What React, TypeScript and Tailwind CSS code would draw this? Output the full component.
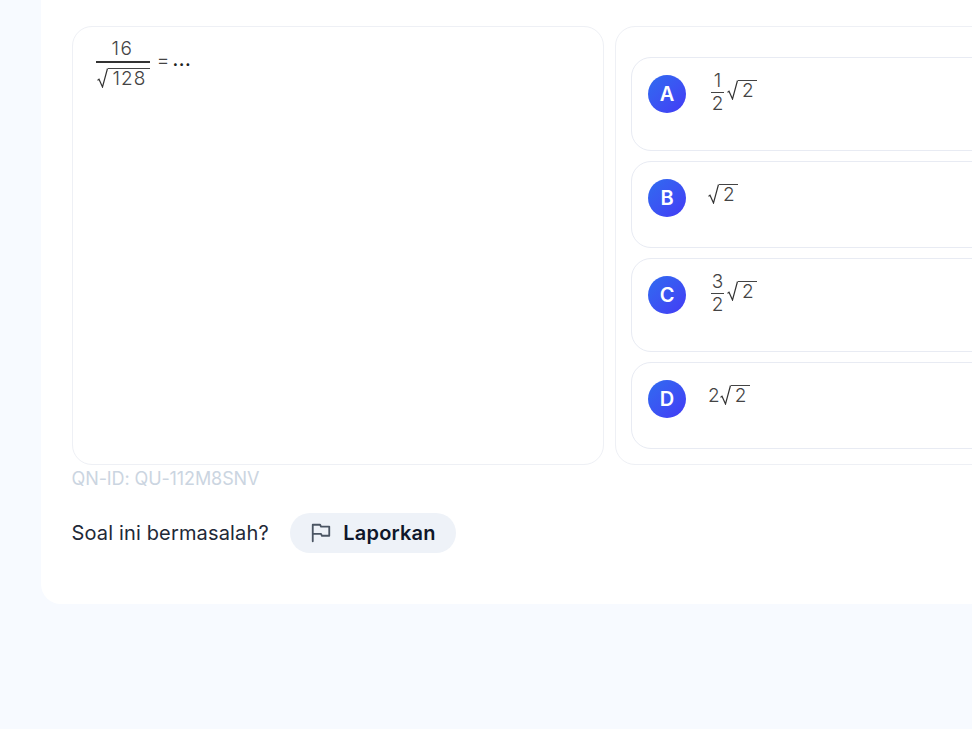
const mathFont = "font-['Inter',sans-serif] font-light text-[#444444]";

function Radical({ w, h }: { w: number; h: number }) {
  return (
    <svg width={w} height={h} viewBox={`0 0 ${w} ${h}`} fill="none" className="shrink-0 block">
      <path d={`M0.5 ${h * 0.62} L2 ${h * 0.56} L${w * 0.5} ${h - 1} L${w - 0.5} 0.5`} stroke="#333333" strokeWidth="1.2" />
    </svg>
  );
}

function Sqrt({ children }: { children: string }) {
  return (
    <span className="flex items-start">
      <Radical w={11} h={20} />
      <span className="border-t border-[#444444] w-[19px] h-[20px] pl-[4px] text-[19px] leading-[19px]">{children}</span>
    </span>
  );
}

function Frac({ n, d }: { n: string; d: string }) {
  return (
    <span className="flex flex-col items-center w-[13px] mr-[3px] text-[19px] leading-[20px]">
      <span className="h-[21px]">{n}</span>
      <span className="w-full border-t border-[#444444] h-[1px]"></span>
      <span className="h-[22px] pt-[1px]">{d}</span>
    </span>
  );
}

function Option({
  letter,
  height,
  children,
}: {
  letter: string;
  height: string;
  children: React.ReactNode;
}) {
  return (
    <div className={`flex items-start border border-[#e8ebf3] rounded-[20px] bg-white pl-[16px] pt-[17px] ${height}`}>
      <div className="w-[38px] h-[38px] rounded-full bg-gradient-to-br from-[#2f6bf0] to-[#4338f5] flex items-center justify-center text-white text-[20px] font-semibold shrink-0">
        {letter}
      </div>
      {children}
    </div>
  );
}

export default function App() {
  return (
    <div className="w-[972px] h-[729px] overflow-hidden bg-[#f7faff] pl-[41px] font-['Inter',sans-serif]">
      <div className="w-[1140px] h-[604px] bg-white rounded-b-[20px] pl-[30.5px] pt-[26px]">
        <div className="flex gap-[11px] items-stretch">
          <div className="w-[532.5px] h-[439px] border border-[#eef0f5] rounded-[20px] pl-[23px] pt-[9px]">
            <div className={`flex items-start ${mathFont}`}>
              <div className="flex flex-col items-center w-[54px]">
                <span className="text-[19px] leading-[24px] h-[25px] pt-[1px] tracking-[1.5px]">16</span>
                <span className="w-full border-t-[2px] border-[#333333] h-[2px]"></span>
                <span className="flex items-start w-[54px] mt-[5px] pl-[1px]">
                  <Radical w={11} h={20} />
                  <span className="border-t border-[#444444] flex-1 h-[19px] pl-[5px] text-[19px] leading-[19px] tracking-[1px]">128</span>
                </span>
              </div>
              <span className="ml-[7px] mt-[12px] text-[20px] leading-[24px]">=</span>
              <span className="ml-[3px] mt-[12px] text-[19px] leading-[24px] text-[#222222] font-medium tracking-[0.5px]">...</span>
            </div>
          </div>
          <div className="w-[532px] h-[439px] border border-[#eef0f5] rounded-[20px] pl-[15px] pr-[15px] pt-[30px] flex flex-col gap-[10px]">
            <Option letter="A" height="h-[94px]">
              <div className={`ml-[25px] -mt-[4px] flex items-start ${mathFont}`}>
                <Frac n="1" d="2" />
                <span className="mt-[9px]"><Sqrt>2</Sqrt></span>
              </div>
            </Option>
            <Option letter="B" height="h-[87px]">
              <div className={`ml-[22px] mt-[5px] flex items-start ${mathFont}`}>
                <Sqrt>2</Sqrt>
              </div>
            </Option>
            <Option letter="C" height="h-[94px]">
              <div className={`ml-[25px] -mt-[4px] flex items-start ${mathFont}`}>
                <Frac n="3" d="2" />
                <span className="mt-[9px]"><Sqrt>2</Sqrt></span>
              </div>
            </Option>
            <Option letter="D" height="h-[87px]">
              <div className={`ml-[22px] mt-[5px] flex items-start ${mathFont}`}>
                <span className="text-[19px] leading-[20px] mt-[1px]">2</span>
                <Sqrt>2</Sqrt>
              </div>
            </Option>
          </div>
        </div>
        <div className="text-[18px] leading-[28px] text-[#cbd5e1] tracking-[-0.1px]">QN-ID: QU-112M8SNV</div>
        <div className="flex items-center mt-[20px]">
          <span className="text-[20px] leading-[28px] text-[#1f2937] tracking-[0.15px]">Soal ini bermasalah?</span>
          <button className="ml-[21.5px] h-[40px] w-[165.5px] rounded-full bg-[#eef2f8] flex items-center pl-[20px]">
            <svg width="22" height="22" viewBox="0 0 24 24" fill="none" stroke="#4b5563" strokeWidth="2" strokeLinecap="round" strokeLinejoin="round">
              <path d="M3 21V3h8l1 2h9v10h-8l-1-2H3" />
            </svg>
            <span className="ml-[11px] text-[20px] font-semibold text-[#0f172a] tracking-[0.2px]">Laporkan</span>
          </button>
        </div>
      </div>
    </div>
  );
}
